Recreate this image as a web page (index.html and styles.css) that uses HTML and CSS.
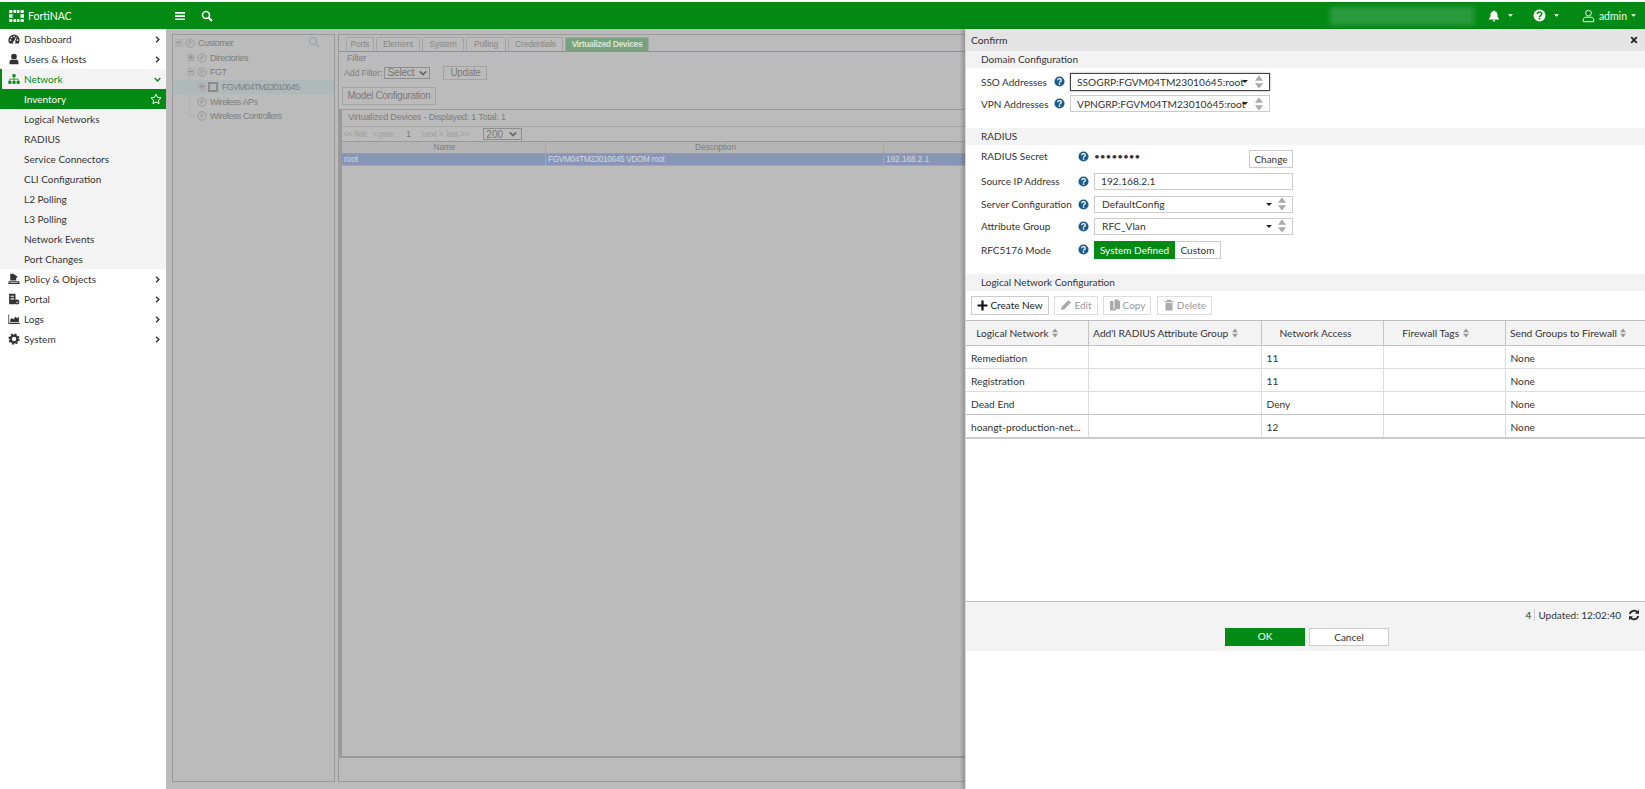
FILE: index.html
```html
<!DOCTYPE html>
<html lang="en">
<head>
<meta charset="utf-8">
<title>FortiNAC</title>
<link rel="stylesheet" href="styles.css">
</head>
<body>
<svg class="defs" width="0" height="0" aria-hidden="true">
  <defs>
    <symbol id="i-dash" viewBox="0 0 16 16"><path fill="currentColor" d="M8 2a7.500 7.500 0 0 0-7.500 7.500c0 1.700.5 3.200 1.400 4.500h12.200c.9-1.300 1.400-2.800 1.400-4.500A7.500 7.500 0 0 0 8 2z"/><g fill="#fff"><circle cx="3.300" cy="9.500" r="1.100"/><circle cx="4.700" cy="6" r="1.100"/><circle cx="8" cy="4.600" r="1.100"/><circle cx="12.700" cy="9.500" r="1.100"/><path d="M10.600 5.400l1 .5-2.200 5.400a1.700 1.700 0 1 1-1.400-.4z"/></g></symbol>
    <symbol id="i-user" viewBox="0 0 16 16"><path fill="currentColor" d="M8 1a3.700 3.700 0 1 1 0 7.600A3.700 3.700 0 0 1 8 1zM2 15v-2.600c0-2 1.200-3.400 3-3.800 1.700 1 4.300 1 6 0 1.800.4 3 1.800 3 3.800V15z"/></symbol>
    <symbol id="i-net" viewBox="0 0 16 16"><g fill="currentColor"><rect x="6" y="1.500" width="4" height="4"/><rect x=".5" y="10.500" width="4" height="4"/><rect x="6" y="10.500" width="4" height="4"/><rect x="11.500" y="10.500" width="4" height="4"/><path d="M7.500 5h1v2.500h5.500v3h-1V8.500H8.500v2h-1v-2H3v2H2v-3h5.500z"/></g></symbol>
    <symbol id="i-policy" viewBox="0 0 16 16"><path fill="currentColor" d="M3 1h4l6 4-2 1.500V10H3zM1 11h14l.6 3.500H.4z"/><path fill="#fff" d="M2.500 12h11v.8h-11z"/></symbol>
    <symbol id="i-portal" viewBox="0 0 16 16"><path fill="currentColor" d="M1.500 1H10v14H1.500z"/><path fill="#fff" d="M3.500 3.500h4.500v1.500H3.500zM3.500 7h4.500v1.500H3.500z"/><circle cx="12" cy="12" r="3.300" fill="currentColor"/><path d="M10.500 12l1.200 1.200 2-2.200" stroke="#fff" fill="none"/></symbol>
    <symbol id="i-logs" viewBox="0 0 16 16"><path fill="currentColor" d="M.5 2h1v11h14v1.500H.5zM3 12V8.500l2.500-2 2 2 2.500-4 2 2.500 2.500-2V12z"/></symbol>
    <symbol id="i-gear" viewBox="0 0 16 16"><circle cx="8" cy="8" r="4.500" fill="none" stroke="currentColor" stroke-width="3"/><circle cx="8" cy="8" r="6.300" fill="none" stroke="currentColor" stroke-width="2.500" stroke-dasharray="2.500 2.450"/></symbol>
    <symbol id="i-right" viewBox="0 0 10 10"><path d="M3 1l4 4-4 4" fill="none" stroke="currentColor" stroke-width="2"/></symbol>
    <symbol id="i-down" viewBox="0 0 10 10"><path d="M1 3l4 4 4-4" fill="none" stroke="currentColor" stroke-width="2"/></symbol>
    <symbol id="i-star" viewBox="0 0 16 16"><path fill="none" stroke="currentColor" stroke-width="1.300" d="M8 1.500l2 4.300 4.700.6-3.500 3.200.9 4.700L8 12l-4.100 2.300.9-4.700L1.300 6.400 6 5.800z"/></symbol>
    <symbol id="i-bars" viewBox="0 0 12 12"><path fill="currentColor" d="M1 2h10v1.700H1zM1 5.200h10v1.700H1zM1 8.400h10v1.700H1z"/></symbol>
    <symbol id="i-search" viewBox="0 0 12 12"><circle cx="5" cy="5" r="3.500" fill="none" stroke="currentColor" stroke-width="1.600"/><path d="M7.500 7.500l3.500 3.500" stroke="currentColor" stroke-width="2"/></symbol>
    <symbol id="i-bell" viewBox="0 0 12 12"><path fill="currentColor" d="M6 .5c.5 0 .8.300.8.800 1.800.4 2.700 1.900 2.700 3.700 0 1.800.6 3 1.500 3.800v.7H1v-.7c.9-.8 1.500-2 1.500-3.800 0-1.800.9-3.300 2.700-3.700 0-.5.3-.8.800-.8zM4.700 10.300h2.600A1.300 1.300 0 0 1 6 11.600a1.300 1.300 0 0 1-1.300-1.300z"/></symbol>
    <symbol id="i-help" viewBox="0 0 12 12"><circle cx="6" cy="6" r="5.500" fill="currentColor"/><path d="M4 4.600c0-2.400 4-2.400 4 0 0 1.400-2 1.400-2 2.700" fill="none" stroke="var(--q, #fff)" stroke-width="1.400"/><rect x="5.200" y="8" width="1.600" height="1.600" fill="var(--q, #fff)"/></symbol>
    <symbol id="i-admin" viewBox="0 0 16 16"><g fill="none" stroke="currentColor" stroke-width="1.100"><circle cx="8" cy="4.500" r="3.500"/><path d="M1.500 15v-2.500c0-1.500 1.500-3 3-3h7c1.500 0 3 1.500 3 3V15z"/></g></symbol>
    <symbol id="i-close" viewBox="0 0 10 10"><path d="M1.500 1.500l7 7M8.500 1.500l-7 7" stroke="currentColor" stroke-width="2.300"/></symbol>
    <symbol id="i-refresh" viewBox="0 0 12 12"><g fill="none" stroke="currentColor" stroke-width="1.800"><path d="M1.700 5A4.400 4.400 0 0 1 9.400 3.300"/><path d="M10.300 7a4.400 4.400 0 0 1-7.700 1.700"/></g><path fill="currentColor" d="M11 .8v4H7zM1 11.200v-4h4z"/></symbol>
    <symbol id="i-plus" viewBox="0 0 10 10"><path fill="currentColor" d="M4 .5h2V4h3.500v2H6v3.500H4V6H.5V4H4z"/></symbol>
    <symbol id="i-pencil" viewBox="0 0 12 12"><path fill="currentColor" d="M8.500 1L11 3.500 4 10.500 1 11l.5-3z"/></symbol>
    <symbol id="i-copy" viewBox="0 0 12 12"><path fill="currentColor" d="M1 2h3.500v8H7v1.500H1zM5.500.5H9l2 2v7.500H5.500z"/></symbol>
    <symbol id="i-trash" viewBox="0 0 12 12"><path fill="currentColor" d="M1.500 2H4V.8h4V2h2.500v1.200h-9zM2.500 4h7v7.500h-7z"/></symbol>
    <symbol id="i-logo" viewBox="0 0 15 12"><g fill="currentColor"><rect x="0" y="0" width="3.500" height="3" rx="1.200"/><rect x="4.500" y="0" width="2.600" height="3"/><rect x="7.900" y="0" width="2.600" height="3"/><rect x="11.500" y="0" width="3.500" height="3" rx="1.200"/><rect x="0" y="4.200" width="3.500" height="3.600"/><rect x="11.500" y="4.200" width="3.500" height="3.600"/><rect x="0" y="9" width="3.500" height="3" rx="1.200"/><rect x="4.500" y="9" width="2.600" height="3"/><rect x="7.900" y="9" width="2.600" height="3"/><rect x="11.500" y="9" width="3.500" height="3" rx="1.200"/></g></symbol>
    <symbol id="i-sort" viewBox="0 0 8 12"><path fill="currentColor" d="M4 .5l3.500 4.500H.5zM4 11.500L.5 7h7z"/></symbol>
    <symbol id="i-caret" viewBox="0 0 8 4"><path fill="currentColor" d="M0 0h8L4 4z"/></symbol>
    <symbol id="i-tree" viewBox="0 0 12 12"><circle cx="6" cy="6" r="5" fill="none" stroke="currentColor" stroke-width="1.200"/><path d="M4.800 9V3.500h1.800a1.400 1.400 0 0 1 0 2.800H4.800" fill="none" stroke="currentColor"/></symbol>
  </defs>
</svg>

<div class="app">
  <div class="topline"></div>
  <header class="topbar">
    <div class="brand"><svg class="logo"><use href="#i-logo"/></svg><span>FortiNAC</span></div>
    <div class="top-tools">
      <svg class="top-icon"><use href="#i-bars"/></svg>
      <svg class="top-icon"><use href="#i-search"/></svg>
    </div>
    <div class="top-right">
      <div class="blurred"></div>
      <svg class="top-icon bell"><use href="#i-bell"/></svg><svg class="caret caret-bell"><use href="#i-caret"/></svg>
      <svg class="top-icon help-top"><use href="#i-help"/></svg><svg class="caret caret-help"><use href="#i-caret"/></svg>
      <svg class="admin-icon"><use href="#i-admin"/></svg><span class="admin">admin</span><svg class="caret"><use href="#i-caret"/></svg>
    </div>
  </header>

  <div class="workspace">
    <nav class="sidebar">
      <a class="nav-item"><svg class="nav-icon"><use href="#i-dash"/></svg><span>Dashboard</span><svg class="chev"><use href="#i-right"/></svg></a>
      <a class="nav-item"><svg class="nav-icon"><use href="#i-user"/></svg><span>Users &amp; Hosts</span><svg class="chev"><use href="#i-right"/></svg></a>
      <a class="nav-item open"><svg class="nav-icon"><use href="#i-net"/></svg><span>Network</span><svg class="chev"><use href="#i-down"/></svg></a>
      <div class="subnav">
        <a class="sub-item active"><span>Inventory</span><svg class="star"><use href="#i-star"/></svg></a>
        <a class="sub-item">Logical Networks</a>
        <a class="sub-item">RADIUS</a>
        <a class="sub-item">Service Connectors</a>
        <a class="sub-item">CLI Configuration</a>
        <a class="sub-item">L2 Polling</a>
        <a class="sub-item">L3 Polling</a>
        <a class="sub-item">Network Events</a>
        <a class="sub-item">Port Changes</a>
      </div>
      <a class="nav-item"><svg class="nav-icon"><use href="#i-policy"/></svg><span>Policy &amp; Objects</span><svg class="chev"><use href="#i-right"/></svg></a>
      <a class="nav-item"><svg class="nav-icon"><use href="#i-portal"/></svg><span>Portal</span><svg class="chev"><use href="#i-right"/></svg></a>
      <a class="nav-item"><svg class="nav-icon"><use href="#i-logs"/></svg><span>Logs</span><svg class="chev"><use href="#i-right"/></svg></a>
      <a class="nav-item"><svg class="nav-icon"><use href="#i-gear"/></svg><span>System</span><svg class="chev"><use href="#i-right"/></svg></a>
    </nav>

    <main class="main">
      <section class="tree">
        <span class="tree-lines"></span>
        <svg class="tree-search"><use href="#i-search"/></svg>
        <div class="tree-row l0"><span class="exp">−</span><svg class="tree-icon"><use href="#i-tree"/></svg><span>Customer</span></div>
        <div class="tree-row l1"><span class="exp">+</span><svg class="tree-icon"><use href="#i-tree"/></svg><span>Directories</span></div>
        <div class="tree-row l1"><span class="exp">−</span><svg class="tree-icon"><use href="#i-tree"/></svg><span>FGT</span></div>
        <div class="tree-row l2 sel"><span class="exp">+</span><span class="tree-square"></span><span>FGVM04TM23010645</span></div>
        <div class="tree-row l1b"><svg class="tree-icon"><use href="#i-tree"/></svg><span>Wireless APs</span></div>
        <div class="tree-row l1b"><svg class="tree-icon"><use href="#i-tree"/></svg><span>Wireless Controllers</span></div>
      </section>

      <section class="detail">
        <div class="tabs">
          <span class="tab t-ports">Ports</span>
          <span class="tab t-element">Element</span>
          <span class="tab t-system">System</span>
          <span class="tab t-polling">Polling</span>
          <span class="tab t-cred">Credentials</span>
          <span class="tab t-virt">Virtualized Devices</span>
        </div>
        <div class="filter">
          <div class="filter-title">Filter</div>
          <div class="filter-row">
            <span>Add Filter:</span>
            <span class="old-select sel-filter">Select<svg class="old-chev"><use href="#i-down"/></svg></span>
            <span class="old-btn btn-update">Update</span>
          </div>
          <span class="old-btn btn-model">Model Configuration</span>
        </div>
        <div class="listing">
          <div class="listing-title">Virtualized Devices - Displayed: 1 Total: 1</div>
          <div class="pager">
            <span class="faint">&lt;&lt; first</span><span class="faint">&lt; prev</span><span class="page-no">1</span><span class="faint">next &gt;</span><span class="faint last-link">last &gt;&gt;</span>
            <span class="old-select sel-page">200<svg class="old-chev"><use href="#i-down"/></svg></span>
          </div>
          <div class="grid-head"><span class="c-name">Name</span><span class="c-desc">Description</span><span class="c-ip"></span></div>
          <div class="grid-row"><span class="c-name">root</span><span class="c-desc">FGVM04TM23010645 VDOM root</span><span class="c-ip">192.168.2.1</span></div>
        </div>
      </section>
    </main>

    <aside class="panel">
      <div class="panel-head"><span>Confirm</span><svg class="panel-close"><use href="#i-close"/></svg></div>

      <div class="section-title">Domain Configuration</div>
      <div class="form form-domain">
        <div class="form-row">
          <span class="label">SSO Addresses</span><svg class="help"><use href="#i-help"/></svg>
          <div class="control select focus"><span class="value">SSOGRP:FGVM04TM23010645:root</span><svg class="sel-caret near"><use href="#i-caret"/></svg><svg class="spin"><use href="#i-sort"/></svg></div>
        </div>
        <div class="form-row">
          <span class="label">VPN Addresses</span><svg class="help"><use href="#i-help"/></svg>
          <div class="control select"><span class="value">VPNGRP:FGVM04TM23010645:root</span><svg class="sel-caret near"><use href="#i-caret"/></svg><svg class="spin"><use href="#i-sort"/></svg></div>
        </div>
      </div>

      <div class="section-title">RADIUS</div>
      <div class="form form-radius">
        <div class="form-row secret-row">
          <span class="label">RADIUS Secret</span><svg class="help"><use href="#i-help"/></svg>
          <span class="dots">••••••••</span>
          <span class="btn-change">Change</span>
        </div>
        <div class="form-row">
          <span class="label">Source IP Address</span><svg class="help"><use href="#i-help"/></svg>
          <div class="control"><span class="value">192.168.2.1</span></div>
        </div>
        <div class="form-row after-source">
          <span class="label">Server Configuration</span><svg class="help"><use href="#i-help"/></svg>
          <div class="control select"><span class="value wide">DefaultConfig</span><svg class="sel-caret"><use href="#i-caret"/></svg><svg class="spin"><use href="#i-sort"/></svg></div>
        </div>
        <div class="form-row">
          <span class="label">Attribute Group</span><svg class="help"><use href="#i-help"/></svg>
          <div class="control select"><span class="value wide">RFC_Vlan</span><svg class="sel-caret"><use href="#i-caret"/></svg><svg class="spin"><use href="#i-sort"/></svg></div>
        </div>
        <div class="form-row toggle-row">
          <span class="label">RFC5176 Mode</span><svg class="help"><use href="#i-help"/></svg>
          <div class="toggle"><span class="toggle-on">System Defined</span><span class="toggle-off">Custom</span></div>
        </div>
      </div>

      <div class="section-title">Logical Network Configuration</div>
      <div class="toolbar">
        <span class="tool tool-create"><svg class="tool-icon"><use href="#i-plus"/></svg>Create New</span>
        <span class="tool tool-edit off"><svg class="tool-icon"><use href="#i-pencil"/></svg>Edit</span>
        <span class="tool tool-copy off"><svg class="tool-icon"><use href="#i-copy"/></svg>Copy</span>
        <span class="tool tool-delete off"><svg class="tool-icon"><use href="#i-trash"/></svg>Delete</span>
      </div>

      <div class="table-wrap">
        <table class="nets">
          <colgroup><col class="col1"><col class="col2"><col class="col3"><col class="col4"><col class="col5"></colgroup>
          <thead>
            <tr>
              <th>Logical Network <svg class="sort"><use href="#i-sort"/></svg></th>
              <th>Add'l RADIUS Attribute Group <svg class="sort"><use href="#i-sort"/></svg></th>
              <th>Network Access</th>
              <th>Firewall Tags <svg class="sort"><use href="#i-sort"/></svg></th>
              <th>Send Groups to Firewall <svg class="sort"><use href="#i-sort"/></svg></th>
            </tr>
          </thead>
          <tbody>
            <tr><td>Remediation</td><td></td><td>11</td><td></td><td>None</td></tr>
            <tr><td>Registration</td><td></td><td>11</td><td></td><td>None</td></tr>
            <tr class="strong-line"><td>Dead End</td><td></td><td>Deny</td><td></td><td>None</td></tr>
            <tr class="last"><td>hoangt-production-net...</td><td></td><td>12</td><td></td><td>None</td></tr>
          </tbody>
        </table>
      </div>

      <div class="panel-foot">
        <div class="status"><span class="count">4</span><span>Updated: 12:02:40</span><svg class="refresh"><use href="#i-refresh"/></svg></div>
        <div class="actions"><span class="btn-ok">OK</span><span class="btn-cancel">Cancel</span></div>
      </div>
    </aside>
  </div>
</div>
</body>
</html>
```
FILE: styles.css
```css
* { box-sizing: border-box; }
html, body { margin: 0; height: 100%; }
body { font-family: Lato, "Liberation Sans", sans-serif; font-size: 10px; color: #333; background: #fff; overflow: hidden; }
.defs { position: absolute; }
svg { display: block; flex: none; }
.app { height: 789px; display: flex; flex-direction: column; }
.topline { height: 2px; background: #fff; }

/* top bar */
.topbar { height: 27px; background: #038a14; color: #fff; display: flex; align-items: center; }
.brand { width: 166px; display: flex; align-items: center; padding-left: 9px; font-size: 10.500px; }
.logo { width: 15px; height: 12px; margin-right: 4px; }
.top-tools { display: flex; gap: 15px; padding-left: 8px; }
.top-icon { width: 12px; height: 12px; }
.top-right { margin-left: auto; display: flex; align-items: center; padding-right: 9px; }
.blurred { width: 144px; height: 18px; margin-right: 14px; background: #2a9a3e; filter: blur(2.500px); }
.bell { margin-right: 8px; }
.caret-bell { margin-right: 20px; }
.help-top { --q: #038a14; margin-right: 8px; width: 13px; height: 13px; }
.caret-help { margin-right: 23px; }
.caret { width: 5px; height: 3px; }
.admin-icon { width: 13px; height: 14px; margin-right: 4px; }
.admin { font-size: 10.500px; color: #e8fff0; margin-right: 4px; }

/* sidebar */
.workspace { flex: 1; display: flex; min-height: 0; }
.sidebar { width: 166px; flex: none; background: #fff; font-size: 10px; }
.nav-item { height: 20px; display: flex; align-items: center; padding-left: 8px; padding-right: 5px; color: #333; }
.nav-icon { width: 12px; height: 12px; margin-right: 4px; color: #333; }
.nav-item span { flex: 1; }
.chev { width: 7px; height: 7px; }
.nav-item.open { background: #f3f3f3; color: #038a14; border-left: 2px solid #038a14; padding-left: 6px; }
.nav-item.open .nav-icon { color: #038a14; }
.subnav { background: #f3f3f3; }
.sub-item { height: 20px; display: flex; align-items: center; padding-left: 24px; color: #333; }
.sub-item.active { background: #038a14; color: #fff; justify-content: space-between; padding-right: 4px; }
.star { width: 12px; height: 12px; }

/* dimmed page */
.main { width: 799px; flex: none; background: #bbb; display: flex; padding: 5px 0 7px 6px; gap: 3px; overflow: hidden; font-family: "Liberation Sans", sans-serif; font-size: 9px; color: #7d7d7d; }
.tree { width: 163px; flex: none; border: 1px solid #9a9a9a; padding-top: 1px; position: relative; letter-spacing: -.45px; }
.tree-lines { position: absolute; left: 16px; top: 16px; width: 7px; height: 65px; border-left: 1px dotted #a3a3a3; border-bottom: 1px dotted #a3a3a3; }
.tree-search { position: absolute; right: 14px; top: 1px; width: 12px; height: 12px; color: #9fa7ad; }
.tree-row { height: 14.600px; display: flex; align-items: center; position: relative; }
.tree-row.l0 { padding-left: 2px; }
.tree-row.l1 { padding-left: 14px; }
.tree-row.l1b { padding-left: 24px; }
.tree-row.l2 { padding-left: 25px; }
.tree-row.sel { background: #afb9ba; color: #808080; letter-spacing: -.75px; }
.exp { width: 8px; height: 8px; line-height: 7px; text-align: center; background: #b0b0b0; color: #8d8d8d; margin-right: 2px; font-size: 10px; letter-spacing: 0; }
.tree-icon { width: 10px; height: 10px; color: #999; margin-right: 3px; }
.tree-square { width: 10px; height: 10px; border: 2px solid #8c8c8c; margin-right: 4px; }
.detail { flex: 1; min-width: 0; border: 1px solid #9a9a9a; border-right: 0; display: flex; flex-direction: column; padding-bottom: 23px; }
.tabs { height: 17px; display: flex; gap: 2px; padding: 2px 0 0 7px; border-bottom: 1px solid #8e929c; font-size: 8.500px; letter-spacing: -.2px; }
.tab { height: 14px; line-height: 13px; text-align: center; border: 1px solid #a4a4a4; border-bottom: 0; border-radius: 2px 2px 0 0; color: #888; }
.t-ports { width: 28px; }
.t-element { width: 44px; }
.t-system { width: 42px; }
.t-polling { width: 40px; }
.t-cred { width: 55px; }
.t-virt { width: 84px; background: #77a37c; color: #d7e4d8; font-weight: bold; letter-spacing: -.35px; }
.filter { height: 57px; padding-left: 3px; letter-spacing: -.15px; }
.filter-title { padding: 1px 0 0 5px; height: 12px; }
.filter-row { display: flex; align-items: center; height: 15px; margin-top: 1px; gap: 2px; color: #7f7f7f; padding-left: 2px; font-size: 8.800px; }
.old-select { display: flex; align-items: center; justify-content: space-between; border: 1px solid #8e8e8e; padding: 0 2px; height: 12px; color: #777; font-size: 10px; }
.sel-filter { width: 46px; }
.old-chev { width: 8px; height: 8px; color: #666; }
.old-btn { border: 1px solid #a2a2a2; text-align: center; color: #7b7b7b; font-size: 10px; letter-spacing: -.35px; }
.btn-update { width: 44px; height: 14px; line-height: 12px; margin-left: 11px; }
.btn-model { display: block; width: 94px; height: 18px; line-height: 16px; margin-top: 7px; }
.listing { flex: 1; border-left: 3px solid #999; border-bottom: 2px solid #999; border-top: 1px solid #9a9a9a; display: flex; flex-direction: column; }
.listing-title { height: 17px; line-height: 15px; padding-left: 6px; border-bottom: 1px solid #a6a6a6; letter-spacing: -.17px; }
.pager { height: 15px; display: flex; align-items: center; gap: 6px; padding-left: 1px; border-bottom: 1px solid #999; color: #777; }
.faint { color: #a0a0a0; font-size: 8.500px; letter-spacing: -.35px; }
.page-no { margin: 0 5px 0 6px; }
.last-link { margin-left: -3px; }
.sel-page { width: 39px; margin-left: 8px; padding-right: 4px; }
.grid-head, .grid-row { display: flex; font-size: 8.200px; }
.grid-head { height: 12px; line-height: 11px; background: #b5b5b5; border-bottom: 1px solid #9a9a9a; text-align: center; }
.grid-row { height: 12px; line-height: 11px; background: #8896b6; color: #d4d8e2; border-bottom: 1px solid #a6a6a6; }
.grid-row .c-desc { letter-spacing: -.3px; }
.c-name { width: 204px; padding-left: 2px; border-right: 1px solid #a8a8a8; }
.c-desc { width: 338px; padding-left: 2px; border-right: 1px solid #a8a8a8; }
.c-ip { flex: 1; padding-left: 2px; }

/* confirm panel */
.panel { width: 680px; flex: none; background: #fff; display: flex; flex-direction: column; box-shadow: -3px 0 3px rgba(0,0,0,.18); border-left: 1px solid #d8d8d8; position: relative; font-size: 10px; }
.panel-head { height: 22px; flex: none; background: #e4e4e4; display: flex; align-items: center; justify-content: space-between; padding: 0 7px 0 5px; font-size: 10.300px; }
.panel-close { width: 8px; height: 8px; color: #222; }
.section-title { height: 17px; flex: none; line-height: 16px; background: #f3f3f3; padding-left: 15px; }
.form { padding-left: 15px; width: 327px; display: flex; flex-direction: column; gap: 5px; }
.form-domain { padding-top: 5px; padding-bottom: 15.500px; }
.form-radius { padding-top: 5px; padding-bottom: 15px; }
.form-row { display: flex; align-items: center; height: 17px; }
.after-source { margin-top: 1px; }
.label { flex: none; white-space: nowrap; }
.form-domain .label { width: 73px; }
.form-radius .label { width: 97px; }
.help { width: 11px; height: 11px; color: #1b5c8c; margin-right: 5px; }
.control { flex: 1; height: 17px; min-width: 0; display: flex; align-items: center; border: 1px solid #ccc; padding-left: 6px; background: #fff; font-size: 10.200px; }
.form-domain .control { flex: none; width: 200px; }
.select { padding-right: 5px; }
.focus { border: 1px solid #444; box-shadow: 0 0 2px #999; height: 18px; }
.value { flex: 1; min-width: 0; white-space: nowrap; }
.wide { padding-left: 1px; }
.sel-caret { width: 6px; height: 3px; margin-right: 5px; color: #222; position: relative; }
.sel-caret.near { margin-right: 6px; }
.spin { width: 10px; height: 14px; color: #aaa; }
.secret-row { height: 18px; align-items: flex-start; }
.secret-row .label, .secret-row .dots { line-height: 13px; }
.secret-row .help { margin-top: 1px; }
.dots { letter-spacing: 0; color: #333; }
.btn-change { margin-left: auto; width: 44px; height: 18px; line-height: 17px; text-align: center; border: 1px solid #ccc; }
.toggle-row { height: 18px; margin-top: 1px; }
.toggle { display: flex; height: 18px; border: 1px solid #ccc; border-left: 0; line-height: 16px; }
.toggle-on { width: 81px; margin-top: -1px; height: 18px; line-height: 18px; background: #038a14; color: #fff; text-align: center; }
.toggle-off { width: 45px; text-align: center; }
.toolbar { display: flex; height: 29px; padding: 5px 0 0 5px; gap: 5px; flex: none; }
.tool { height: 19px; display: flex; align-items: center; justify-content: center; border: 1px solid #ccc; gap: 2px; }
.tool.off { color: #9a9a9a; border-color: #ddd; }
.tool-create { width: 78px; color: #222; }
.tool-edit { width: 44px; }
.tool-copy { width: 48px; }
.tool-delete { width: 55px; margin-left: 1px; }
.tool-icon { width: 12px; height: 12px; }
.tool-create .tool-icon { color: #111; width: 11px; height: 11px; }
.tool.off .tool-icon { color: #aaa; }
.table-wrap { height: 281px; flex: none; border-top: 1px solid #bdbdbd; }
.nets { width: 100%; table-layout: fixed; border-collapse: collapse; font-size: 10.200px; }
.col1 { width: 122px; }
.col2 { width: 173px; }
.col3 { width: 122px; }
.col4 { width: 122px; }
.nets th { height: 25px; background: #f3f3f3; font-weight: normal; text-align: center; border-right: 1px solid #c4c4c4; border-bottom: 1px solid #c4c4c4; white-space: nowrap; padding: 0 16px 0 0; }
.nets th:nth-child(1) { padding-right: 18px; }
.nets th:nth-child(2) { padding-right: 17px; }
.nets th:nth-child(3) { padding-right: 13px; }
.nets th:last-child { border-right: 0; padding-right: 13px; }
.sort { display: inline-block; width: 8px; height: 10px; color: #999; vertical-align: -1.500px; }
.nets td { height: 23px; padding: 2px 0 0 5px; border-right: 1px solid #ddd; border-bottom: 1px solid #ddd; white-space: nowrap; overflow: hidden; }
.nets td:last-child { border-right: 0; }
.strong-line td { border-bottom-color: #c4c4c4; }
.last td { border-bottom: 2px solid #ccc; }
.panel-foot { height: 50px; flex: none; background: #f3f3f3; border-top: 1px solid #c0c0c0; }
.status { height: 26px; display: flex; align-items: center; justify-content: flex-end; padding-right: 5px; }
.count { padding-right: 3px; margin-right: 3px; border-right: 1px solid #ccc; }
.refresh { width: 12px; height: 12px; margin-left: 7px; color: #222; }
.actions { display: flex; gap: 4px; padding-left: 259px; }
.btn-ok, .btn-cancel { width: 80px; height: 18px; line-height: 17px; text-align: center; }
.btn-ok { background: #038a14; color: #fff; }
.btn-cancel { background: #fff; border: 1px solid #ccc; }
```
